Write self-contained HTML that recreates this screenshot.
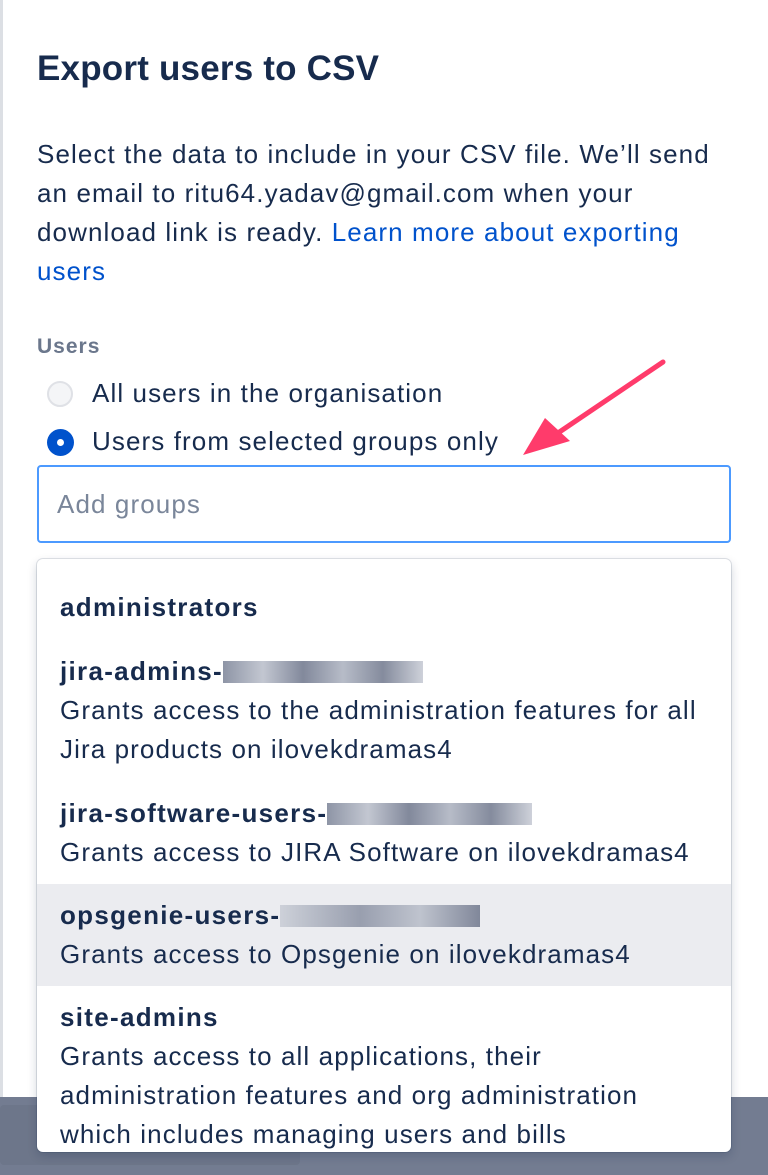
<!DOCTYPE html><html><head><style>
body{margin:0;width:768px;height:1175px;position:relative;overflow:hidden;background:#fff;font-family:"Liberation Sans",sans-serif;color:#172b4d}
.a{position:absolute;white-space:nowrap}
.t{font-size:26px;line-height:39px;letter-spacing:1.1px}
.t b,.b{font-weight:bold;letter-spacing:1.3px}
.blur{display:inline-block;height:22px;vertical-align:-3px;background:linear-gradient(90deg,#7a8296,#b8bdc9 20%,#6c748a 40%,#aab0be 60%,#6f778c 80%,#c5c9d3);opacity:.85}
</style></head><body>
<div class="a" style="left:0;top:1097px;width:768px;height:78px;background:#737c91"></div>
<div class="a" style="left:0;top:1105px;width:300px;height:60px;background:#6d768a;border-radius:4px"></div>
<div class="a" style="left:0;top:0;width:3px;height:1097px;background:#dcdfe4"></div>
<div class="a b" style="left:37px;top:47px;font-size:35px;line-height:44px;letter-spacing:.2px">Export users to CSV</div>
<div class="a t" style="left:37px;top:135px">Select the data to include in your CSV file. We’ll send<br>an email to ritu64.yadav@gmail.com when your<br>download link is ready. <span style="color:#0052cc">Learn more about exporting</span><br><span style="color:#0052cc">users</span></div>
<div class="a b" style="left:37px;top:335px;font-size:21px;letter-spacing:1px;color:#6b778c">Users</div>
<div class="a" style="left:47px;top:381px;width:26px;height:26px;border:2px solid #dfe1e6;border-radius:50%;background:#f4f5f7;box-sizing:border-box"></div>
<div class="a t" style="left:92px;top:374px">All users in the organisation</div>
<div class="a" style="left:47px;top:429px;width:27px;height:27px;border-radius:50%;background:#0052cc"></div>
<div class="a" style="left:57px;top:439px;width:7px;height:7px;border-radius:50%;background:#fff"></div>
<div class="a t" style="left:92px;top:422px">Users from selected groups only</div>
<svg class="a" style="left:515px;top:355px" width="160" height="110"><path d="M148 7 L40 80" stroke="#ff3b6b" stroke-width="5" stroke-linecap="round"/><path d="M8 100 L30 63 L55 86 Z" fill="#ff3b6b"/></svg>
<div class="a" style="left:37px;top:465px;width:694px;height:78px;border:2px solid #4c9aff;border-radius:4px;box-sizing:border-box"></div>
<div class="a t" style="left:57px;top:485px;color:#7a869a">Add groups</div>
<div class="a" style="left:37px;top:559px;width:694px;height:593px;background:#fff;border-radius:6px;box-shadow:0 0 0 1px rgba(9,30,66,.12),0 4px 10px rgba(9,30,66,.2);overflow:hidden">
<div class="a" style="left:0;top:325px;width:694px;height:102px;background:#ebecf0"></div>
<div class="a t b" style="left:23px;top:29px">administrators</div>
<div class="a t" style="left:23px;top:93px"><b>jira-admins-</b><span class="blur" style="width:200px"></span><br>Grants access to the administration features for all<br>Jira products on ilovekdramas4</div>
<div class="a t" style="left:23px;top:235px"><b>jira-software-users-</b><span class="blur" style="width:205px"></span><br>Grants access to JIRA Software on ilovekdramas4</div>
<div class="a t" style="left:23px;top:337px"><b>opsgenie-users-</b><span class="blur" style="width:200px;background:linear-gradient(90deg,#c8ccd5,#8a91a3 40%,#b7bcc8 70%,#6e768b)"></span><br>Grants access to Opsgenie on ilovekdramas4</div>
<div class="a t" style="left:23px;top:439px"><b>site-admins</b><br>Grants access to all applications, their<br>administration features and org administration<br>which includes managing users and bills</div>
</div>
</body></html>
